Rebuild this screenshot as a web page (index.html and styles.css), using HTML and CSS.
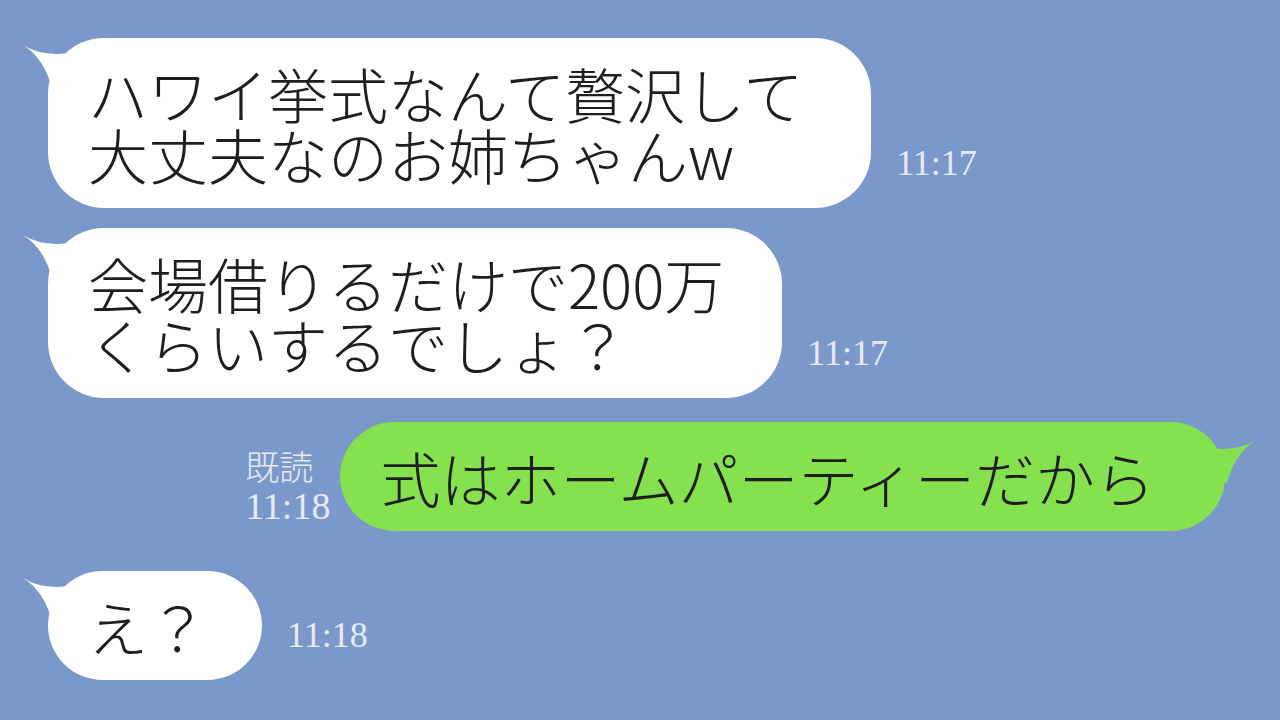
FILE: index.html
```html
<!DOCTYPE html>
<html lang="ja">
<head>
    <meta charset="UTF-8">
    <meta name="viewport" content="width=device-width, initial-scale=1.0">
    <title>トーク</title>
    <link rel="stylesheet" href="styles.css">
</head>
<body>

<div class="chat">
    <div class="row row-in first">
        <div class="bubble bubble-in wide">
            <svg class="tail tail-in" viewBox="0 0 60 60" width="60" height="60"><path d="M5 7 Q26 20 56 14 L50 50 L34 50 Q26 20 5 7 Z"/></svg>
            <p>ハワイ挙式なんて贅沢して<br>大丈夫なのお姉ちゃんw</p>
        </div>
        <span class="time">11:17</span>
    </div>

    <div class="row row-in second">
        <div class="bubble bubble-in">
            <svg class="tail tail-in" viewBox="0 0 60 60" width="60" height="60"><path d="M5 7 Q26 20 56 14 L50 50 L34 50 Q26 20 5 7 Z"/></svg>
            <p>会場借りるだけで200万<br>くらいするでしょ？</p>
        </div>
        <span class="time">11:17</span>
    </div>

    <div class="row row-out">
        <div class="receipt">
            <span class="read">既読</span>
            <span class="time">11:18</span>
        </div>
        <div class="bubble bubble-out">
            <svg class="tail tail-out" viewBox="0 0 60 60" width="60" height="60"><path d="M5 7 Q26 20 56 14 L50 50 L34 50 Q26 20 5 7 Z"/></svg>
            <p>式はホームパーティーだから</p>
        </div>
    </div>

    <div class="row row-in last">
        <div class="bubble bubble-in short">
            <svg class="tail tail-in" viewBox="0 0 60 60" width="60" height="60"><path d="M5 7 Q26 20 56 14 L50 50 L34 50 Q26 20 5 7 Z"/></svg>
            <p>え？</p>
        </div>
        <span class="time">11:18</span>
    </div>
</div>

</body>
</html>
```

FILE: styles.css
```css
body {
    margin: 0;
    width: 1280px;
    height: 720px;
    overflow: hidden;
    background-color: #7a98ca;
    font-family: "Noto Sans CJK JP", "Noto Sans", sans-serif;
}

.chat {
    display: flex;
    flex-direction: column;
    padding: 38px 55px 0 48px;
}

.row {
    display: flex;
    align-items: flex-end;
}

.second {
    margin-top: 20px;
}

.row-out {
    margin-top: 24px;
    justify-content: flex-end;
}

.last {
    margin-top: 40px;
}

.bubble {
    position: relative;
    border-radius: 56px;
    padding: 24px 58px 24px 40px;
}

.bubble p {
    position: relative;
    margin: 0;
    font-size: 60px;
    line-height: 61px;
    font-weight: 300;
    color: #1e1e1e;
    white-space: nowrap;
}

.bubble-in {
    background-color: #ffffff;
}

.bubble-out {
    background-color: #85e14d;
    padding-right: 70px;
}

.wide {
    padding-right: 68px;
}

.short {
    padding-right: 54px;
}

.tail {
    position: absolute;
    top: 0;
}

.tail-in {
    left: -30px;
    fill: #ffffff;
}

.tail-out {
    top: 11px;
    right: -36px;
    transform: scaleX(-1);
    fill: #85e14d;
}

.time {
    font-family: "Liberation Serif", "DejaVu Serif", serif;
    font-size: 36px;
    line-height: 38px;
    color: #e6ecf7;
}

.row-in .time {
    margin: 0 0 26px 25px;
}

.receipt {
    display: flex;
    flex-direction: column;
    align-items: flex-start;
    gap: 2px;
    margin: 0 10px 6px 0;
}

.receipt .time {
    font-size: 38px;
}

.read {
    font-size: 34px;
    line-height: 38px;
    font-weight: 300;
    color: #e6ecf7;
}
```
